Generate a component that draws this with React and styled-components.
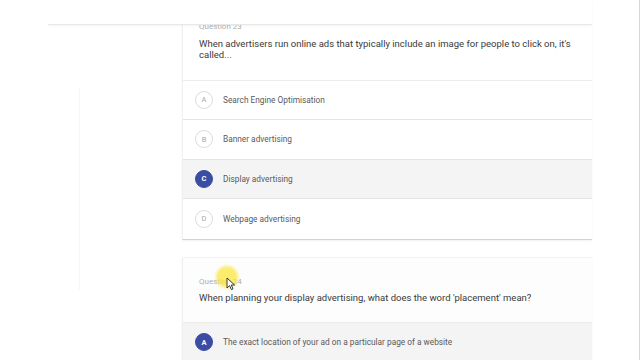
import React from 'react'
import styled, { createGlobalStyle } from 'styled-components'

const questions = [
  {
    number: 23,
    text: "When advertisers run online ads that typically include an image for people to click on, it's called...",
    selected: 'C',
    options: [
      { key: 'A', label: 'Search Engine Optimisation' },
      { key: 'B', label: 'Banner advertising' },
      { key: 'C', label: 'Display advertising' },
      { key: 'D', label: 'Webpage advertising' }
    ]
  },
  {
    number: 24,
    text: "When planning your display advertising, what does the word 'placement' mean?",
    selected: 'A',
    options: [{ key: 'A', label: 'The exact location of your ad on a particular page of a website' }]
  }
]

const App = () => (
  <>
    <GlobalStyle />
    <TopBar />
    <Page>
      <Sidebar>
        <SideRule />
      </Sidebar>
      <Main>
        {questions.map((q, i) => (
          <Card key={q.number} first={i === 0}>
            <Head first={i === 0}>
              <Label>Question {q.number}</Label>
              <QuestionText>{q.text}</QuestionText>
            </Head>
            {q.options.map(o => (
              <Option key={o.key} active={o.key === q.selected}>
                <Bubble active={o.key === q.selected}>{o.key}</Bubble>
                <OptionText>{o.label}</OptionText>
              </Option>
            ))}
          </Card>
        ))}
      </Main>
      <Gutter />
    </Page>
    <Cursor>
      <Glow />
      <svg width="10" height="14" viewBox="0 0 10 14">
        <path d="M1 1 L1 11 L3.6 8.6 L5.4 12.6 L7 11.9 L5.3 8 L8.6 8 Z" fill="#fff" stroke="#222" strokeWidth="0.9" strokeLinejoin="round" />
      </svg>
    </Cursor>
  </>
)

const GlobalStyle = createGlobalStyle`
  html, body {
    margin: 0;
    padding: 0;
    background: #fff;
    font-family: Roboto, "Noto Sans", "Liberation Sans", sans-serif;
    overflow: hidden;
  }
  * { box-sizing: border-box; }
`
const TopBar = styled.div`
  position: fixed;
  top: 0;
  left: 48px;
  width: 544px;
  height: 25px;
  background: #fff;
  border-bottom: 1px solid #e8e8e8;
  box-shadow: 0 2px 2px -1px rgba(0, 0, 0, 0.05);
  z-index: 2;
`
const Page = styled.div`
  display: flex;
  height: 360px;
`
const Sidebar = styled.div`
  width: 182px;
  flex-shrink: 0;
  padding: 88px 0 0 79px;
`
const SideRule = styled.div`
  width: 1px;
  height: 202px;
  background: #f6f6f6;
`
const Main = styled.div`
  width: 410px;
  display: flex;
  flex-direction: column;
  gap: 17px;
`
const Gutter = styled.div`
  flex: 1;
  border-right: 1px solid #d6d6d6;
`
const Card = styled.section`
  background: ${({ first }) => (first ? '#fff' : '#fdfdfd')};
  border-left: 1px solid #f0f0f0;
  border-top: ${({ first }) => (first ? 'none' : '1px solid #f3f3f3')};
  border-bottom: 1px solid #d2d2d2;
  box-shadow: 0 1px 2px rgba(0, 0, 0, 0.06);
`
const Head = styled.div`
  padding: ${({ first }) => (first ? '22px 16px 19px' : '19px 16px 18px')};
  border-bottom: 1px solid #ececec;
`
const Label = styled.div`
  font-size: 8px;
  line-height: 10px;
  color: #b0b0b0;
`
const QuestionText = styled.p`
  margin: 5.5px 0 0;
  font-size: 9.5px;
  line-height: 11.5px;
  color: #3a3a3a;
`
const Option = styled.div`
  display: flex;
  align-items: center;
  height: 39.5px;
  padding-left: 12px;
  gap: 10px;
  background: ${({ active }) => (active ? '#f4f4f4' : '#fff')};
  border-bottom: 1px solid #e4e4e4;
  &:last-child {
    border-bottom: none;
  }
`
const Bubble = styled.span`
  width: 18px;
  height: 18px;
  border-radius: 50%;
  display: flex;
  align-items: center;
  justify-content: center;
  font-size: 7.5px;
  font-weight: ${({ active }) => (active ? 700 : 400)};
  color: ${({ active }) => (active ? '#fff' : '#a8a8a8')};
  background: ${({ active }) => (active ? '#3a4ca4' : '#fff')};
  border: 1px solid ${({ active }) => (active ? '#3a4ca4' : '#dcdcdc')};
`
const OptionText = styled.span`
  font-size: 8.3px;
  color: #5a5a5a;
`
const Cursor = styled.div`
  position: fixed;
  left: 226px;
  top: 277px;
  z-index: 3;
  svg {
    position: relative;
    display: block;
  }
`
const Glow = styled.div`
  position: absolute;
  left: -10px;
  top: -11px;
  width: 22px;
  height: 22px;
  border-radius: 50%;
  background: rgba(250, 230, 60, 0.75);
  filter: blur(1.5px);
`

export default App
